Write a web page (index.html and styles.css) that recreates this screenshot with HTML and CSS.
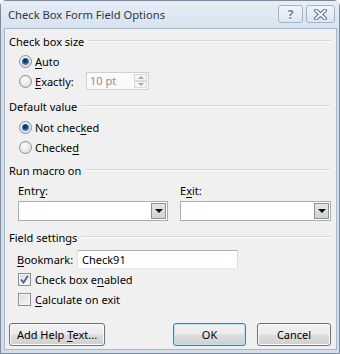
FILE: index.html
```html
<!DOCTYPE html>
<html lang="en">
<head>
    <meta charset="UTF-8">
    <title>Check Box Form Field Options</title>
    <link rel="stylesheet" href="styles.css">
</head>
<body>
    <div class="window">
        <div class="titlebar">
            <span class="title">Check Box Form Field Options</span>
            <div class="caption">
                <span class="cap-btn cap-help">?</span>
                <span class="cap-btn cap-close">
                    <svg width="13" height="11" viewBox="0 0 13 11">
                        <path d="M2 1.5 L11 9.5 M11 1.5 L2 9.5" stroke="#5d6f85" stroke-width="4" stroke-linecap="round"/>
                        <path d="M2 1.5 L11 9.5 M11 1.5 L2 9.5" stroke="#f4f7fa" stroke-width="2" stroke-linecap="round"/>
                    </svg>
                </span>
            </div>
        </div>

        <div class="client">
            <!-- Check box size -->
            <div class="group-head first"><span>Check box size</span><span class="rule"></span></div>
            <div class="option"><span class="radio on"></span><span><u>A</u>uto</span></div>
            <div class="option">
                <span class="radio"></span><span class="exact-label"><u>E</u>xactly:</span>
                <span class="spin">
                    <span class="spin-value">10 pt</span>
                    <span class="spin-arrows">
                        <span class="spin-btn"><i class="tri up"></i></span>
                        <span class="spin-btn"><i class="tri down"></i></span>
                    </span>
                </span>
            </div>

            <!-- Default value -->
            <div class="group-head"><span>Default value</span><span class="rule"></span></div>
            <div class="option tight"><span class="radio on"></span><span>Not chec<u>k</u>ed</span></div>
            <div class="option"><span class="radio"></span><span>Checke<u>d</u></span></div>

            <!-- Run macro on -->
            <div class="group-head macro"><span>Run macro on</span><span class="rule"></span></div>
            <div class="macro-grid">
                <span class="field-label">Entr<u>y</u>:</span>
                <span class="field-label">E<u>x</u>it:</span>
                <span class="combo"><span class="drop"><i class="tri down dark"></i></span></span>
                <span class="combo"><span class="drop"><i class="tri down dark"></i></span></span>
            </div>

            <!-- Field settings -->
            <div class="group-head settings"><span>Field settings</span><span class="rule"></span></div>
            <div class="bookmark-row">
                <span class="bookmark-label"><u>B</u>ookmark:</span>
                <span class="textbox">Check91</span>
            </div>
            <div class="check-row"><span class="checkbox on">
                <svg width="9" height="9" viewBox="0 0 9 9"><path d="M1 4.5 L3.5 7.5 L8 0.8" fill="none" stroke="#4a5f93" stroke-width="1.8"/></svg>
            </span><span>Check box e<u>n</u>abled</span></div>
            <div class="check-row"><span class="checkbox"></span><span><u>C</u>alculate on exit</span></div>

            <div class="button-row">
                <span class="btn help-btn"><span>Add Help <u>T</u>ext...</span></span>
                <span class="btn ok-btn default"><span>OK</span></span>
                <span class="btn cancel-btn"><span>Cancel</span></span>
            </div>
        </div>
    </div>
</body>
</html>
```

FILE: styles.css
```css
* {
    margin: 0;
    padding: 0;
    box-sizing: border-box;
}
body {
    font-family: "Noto Sans", Arial, sans-serif;
    font-size: 11px;
    color: #000;
    background: #fff;
}
u {
    text-decoration: underline;
    text-underline-offset: 2px;
}
.window {
    width: 340px;
    height: 354px;
    border: 1px solid #7d8b9b;
    border-radius: 6px 6px 0 0;
    background: #d3dfec;
    display: flex;
    flex-direction: column;
}
.titlebar {
    height: 27px;
    display: flex;
    justify-content: space-between;
    align-items: flex-start;
    padding: 4px 4px 0 7px;
    background: linear-gradient(#e6edf6, #d7e3f0);
}
.title {
    font-size: 11.2px;
    line-height: 20px;
    color: #2c3744;
}
.caption {
    display: flex;
    gap: 3px;
}
.cap-btn {
    height: 18px;
    display: flex;
    align-items: center;
    justify-content: center;
    border: 1px solid #a4b4c6;
    border-radius: 3px;
    background: linear-gradient(#f0f4f9, #dde6f0);
}
.cap-help {
    width: 25px;
    font-size: 12px;
    font-weight: bold;
    color: #71829a;
    text-shadow: 0 1px 0 #fff;
}
.cap-close {
    width: 29px;
}
.client {
    flex: 1;
    margin: 0 2px 3px 3px;
    border: 1px solid #a9b8c9;
    background: #f0f0f0;
    padding: 0 5px 0 4px;
}
.group-head {
    height: 20px;
    display: flex;
    align-items: center;
    margin-top: 5px;
}
.group-head.first { margin-top: 2px; }
.group-head.macro { margin-top: 3px; }
.group-head.settings { margin-top: 6px; }
.rule {
    flex: 1;
    margin-left: 4px;
    border-top: 1px solid #d8d8d8;
    border-bottom: 1px solid #fcfcfc;
}
.option {
    height: 20px;
    display: flex;
    align-items: center;
    padding-left: 10px;
}
.option.tight { margin-top: 1px; }
.radio {
    flex-shrink: 0;
    width: 13px;
    height: 13px;
    border-radius: 50%;
    border: 1px solid #8b8d8f;
    background: radial-gradient(circle at 40% 35%, #fdfdfd, #d5d6d8);
    margin-right: 3px;
    display: flex;
    align-items: center;
    justify-content: center;
}
.radio.on::after {
    content: "";
    width: 7px;
    height: 7px;
    border-radius: 50%;
    background: radial-gradient(circle at 45% 40%, #0f3a66 0 25%, #3a78b4 60%, #9fc6e8);
}
.exact-label {
    flex-shrink: 0;
    width: 51px;
}
.spin {
    width: 63px;
    height: 18px;
    display: flex;
    border: 1px solid #cdcfd3;
    background: #fafafa;
}
.spin-value {
    flex: 1;
    padding-left: 3px;
    line-height: 16px;
    color: #8f8f8f;
}
.spin-arrows {
    width: 15px;
    display: flex;
    flex-direction: column;
    padding: 1px;
}
.spin-btn {
    flex: 1;
    display: flex;
    align-items: center;
    justify-content: center;
    border: 1px solid #dadada;
    background: #f4f4f4;
}
.tri {
    display: block;
    width: 0;
    height: 0;
    border-left: 3px solid transparent;
    border-right: 3px solid transparent;
}
.tri.up { border-bottom: 3px solid #a8a8a8; }
.tri.down { border-top: 3px solid #a8a8a8; }
.tri.down.dark {
    border-left-width: 4px;
    border-right-width: 4px;
    border-top: 4px solid #111;
}
.macro-grid {
    display: grid;
    grid-template-columns: 150px 1fr;
    grid-template-rows: 19px 20px;
    column-gap: 12px;
    row-gap: 1px;
    margin: 1px 0 0 9px;
}
.field-label {
    line-height: 19px;
}
.combo {
    display: flex;
    justify-content: flex-end;
    border: 1px solid #abadb3;
    background: #fff;
    padding: 1px;
}
.drop {
    width: 15px;
    display: flex;
    align-items: center;
    justify-content: center;
    border: 1px solid #8e9196;
    background: linear-gradient(#e6e6e6, #d2d2d2);
}
.bookmark-row {
    height: 20px;
    margin-top: 2px;
    display: flex;
    align-items: center;
    padding-left: 8px;
}
.bookmark-label {
    flex-shrink: 0;
    width: 60px;
}
.textbox {
    width: 161px;
    height: 19px;
    border: 1px solid #abadb3;
    border-color: #abadb3 #dbdfe6 #e3e9ef #e2e3ea;
    background: #fff;
    padding-left: 4px;
    line-height: 17px;
}
.check-row {
    height: 20px;
    display: flex;
    align-items: center;
    padding-left: 9px;
}
.checkbox {
    flex-shrink: 0;
    width: 13px;
    height: 13px;
    margin-right: 4px;
    border: 1px solid #8e8f8f;
    background: linear-gradient(135deg, #dcdcdc, #f7f7f7);
    box-shadow: inset 0 0 0 1px #f4f4f4;
    display: flex;
    align-items: center;
    justify-content: center;
}
.button-row {
    display: flex;
    gap: 11px;
    margin-top: 14px;
}
.btn {
    height: 23px;
    display: flex;
    align-items: center;
    justify-content: center;
    border: 1px solid #707070;
    border-radius: 3px;
    background: linear-gradient(#f2f2f2 0%, #ebebeb 48%, #dddddd 52%, #cfcfcf 100%);
    box-shadow: inset 0 0 0 1px #fbfbfb;
}
.help-btn { width: 96px; }
.ok-btn { width: 73px; margin-left: auto; }
.cancel-btn { width: 74px; }
.btn.default {
    border-color: #3c7fb1;
    box-shadow: inset 0 0 0 1px #bde3f7;
}
```
